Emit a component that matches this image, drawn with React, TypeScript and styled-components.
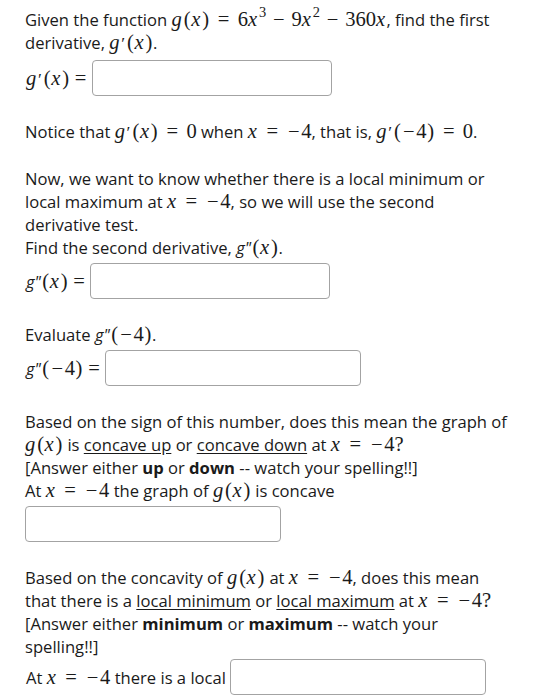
import styled, { createGlobalStyle } from "styled-components";
import type { ReactNode } from "react";

const GlobalStyle = createGlobalStyle`
  html, body {
    margin: 0;
    padding: 0;
    background: #ffffff;
  }
  body {
    font-family: "Open Sans", "DejaVu Sans", sans-serif;
    font-size: 16.6px;
    color: #1a1a1a;
  }
`;

const Page = styled.div`
  width: 535px;
  padding: 8px 25px 0 25px;
  box-sizing: border-box;
  display: flex;
  flex-direction: column;
  gap: 24px;
`;

const Section = styled.div`
  display: flex;
  flex-direction: column;
`;

const Line = styled.div`
  line-height: 23px;
  white-space: nowrap;
`;

const AnswerRow = styled.div<{ $top?: number }>`
  display: flex;
  align-items: center;
  margin-top: ${(p) => p.$top ?? 4}px;
  line-height: 23px;
`;

const Label = styled.span`
  white-space: nowrap;
  padding-left: 1px;
`;

const AnswerBox = styled.input.attrs({ type: "text" })<{ $w: number }>`
  width: ${(p) => p.$w}px;
  height: 36px;
  box-sizing: border-box;
  border: 1px solid #a3a3a3;
  border-radius: 4px;
  background: #ffffff;
  margin: 0;
  padding: 0 6px;
  font: inherit;
  outline: none;
`;

const Math = styled.span`
  font-family: "Liberation Serif", "DejaVu Serif", serif;
  font-size: 1.24em;
  line-height: 1;
  white-space: nowrap;
`;

const Var = styled.span`
  font-family: "Liberation Serif", "DejaVu Serif", serif;
  font-style: italic;
  margin-right: 0.06em;
`;

const Paren = styled.span`
  margin: 0 0.03em;
`;

const Op = styled.span<{ $space?: number }>`
  margin: 0 ${(p) => p.$space ?? 0.4}em;
`;

const Minus = styled.span`
  margin: 0 0.08em;
`;

const Sup = styled.sup`
  font-size: 0.7em;
  line-height: 0;
  vertical-align: 0.6em;
  margin-left: 0.05em;
`;

const Prime = styled.span`
  font-size: 0.85em;
  margin-left: 0.02em;
  margin-right: 0.08em;
`;

/* g" is typed as plain text in the source, so it uses the body font */
const TextG = styled.span`
  font-family: "Open Sans", "DejaVu Sans", sans-serif;
  font-size: 0.8em;
  font-style: italic;
  margin-right: 0.05em;
`;

const Under = styled.span`
  text-decoration: underline;
  text-underline-offset: 2px;
`;

const Bold = styled.b`
  font-weight: 700;
`;

const M = ({ children }: { children: ReactNode }) => <Math>{children}</Math>;

const X = () => <Var>x</Var>;

const Neg4 = () => (
  <>
    <Minus>−</Minus>4
  </>
);

const Args = ({ children }: { children: ReactNode }) => (
  <>
    <Paren>(</Paren>
    {children}
    <Paren>)</Paren>
  </>
);

const GX = () => (
  <>
    <Var>g</Var>
    <Args>
      <X />
    </Args>
  </>
);

const GPrime = ({ arg }: { arg: ReactNode }) => (
  <>
    <Var>g</Var>
    <Prime>′</Prime>
    <Args>{arg}</Args>
  </>
);

const GSecond = ({ arg }: { arg: ReactNode }) => (
  <>
    <TextG>g"</TextG>
    <Args>{arg}</Args>
  </>
);

const XEqMinus4 = () => (
  <M>
    <X />
    <Op>=</Op>
    <Neg4 />
  </M>
);

export default function App() {
  return (
    <>
      <GlobalStyle />
      <Page>
        <Section>
          <Line>
            Given the function{" "}
            <M>
              <GX />
              <Op>=</Op>6<X />
              <Sup>3</Sup>
              <Op $space={0.33}>−</Op>9<X />
              <Sup>2</Sup>
              <Op $space={0.33}>−</Op>360<X />
            </M>
            , find the first
          </Line>
          <Line>
            derivative,{" "}
            <M>
              <GPrime arg={<X />} />
            </M>
            .
          </Line>
          <AnswerRow $top={6}>
            <Label>
              <M>
                <GPrime arg={<X />} />
                <Op $space={0.25}>=</Op>
              </M>
            </Label>
            <AnswerBox $w={240} />
          </AnswerRow>
        </Section>

        <Section>
          <Line>
            Notice that{" "}
            <M>
              <GPrime arg={<X />} />
              <Op>=</Op>0
            </M>{" "}
            when <XEqMinus4 />, that is,{" "}
            <M>
              <GPrime arg={<Neg4 />} />
              <Op>=</Op>0
            </M>
            .
          </Line>
        </Section>

        <Section>
          <Line>Now, we want to know whether there is a local minimum or</Line>
          <Line>
            local maximum at <XEqMinus4 />, so we will use the second
          </Line>
          <Line>derivative test.</Line>
          <Line>
            Find the second derivative,{" "}
            <M>
              <GSecond arg={<X />} />
            </M>
            .
          </Line>
          <AnswerRow>
            <Label>
              <M>
                <GSecond arg={<X />} />
                <Op $space={0.25}>=</Op>
              </M>
            </Label>
            <AnswerBox $w={240} />
          </AnswerRow>
        </Section>

        <Section>
          <Line>
            Evaluate{" "}
            <M>
              <GSecond arg={<Neg4 />} />
            </M>
            .
          </Line>
          <AnswerRow>
            <Label>
              <M>
                <GSecond arg={<Neg4 />} />
                <Op $space={0.25}>=</Op>
              </M>
            </Label>
            <AnswerBox $w={256} />
          </AnswerRow>
        </Section>

        <Section>
          <Line>Based on the sign of this number, does this mean the graph of</Line>
          <Line>
            <M>
              <GX />
            </M>{" "}
            is <Under>concave up</Under> or <Under>concave down</Under> at{" "}
            <M>
              <X />
              <Op>=</Op>
              <Neg4 />?
            </M>
          </Line>
          <Line>
            [Answer either <Bold>up</Bold> or <Bold>down</Bold> -- watch your
            spelling!!]
          </Line>
          <Line>
            At <XEqMinus4 /> the graph of{" "}
            <M>
              <GX />
            </M>{" "}
            is concave
          </Line>
          <AnswerRow>
            <AnswerBox $w={256} />
          </AnswerRow>
        </Section>

        <Section>
          <Line>
            Based on the concavity of{" "}
            <M>
              <GX />
            </M>{" "}
            at <XEqMinus4 />, does this mean
          </Line>
          <Line>
            that there is a <Under>local minimum</Under> or{" "}
            <Under>local maximum</Under> at{" "}
            <M>
              <X />
              <Op>=</Op>
              <Neg4 />?
            </M>
          </Line>
          <Line>
            [Answer either <Bold>minimum</Bold> or <Bold>maximum</Bold> -- watch
            your
          </Line>
          <Line>spelling!!]</Line>
          <AnswerRow $top={1}>
            <Label>
              At <XEqMinus4 /> there is a local&nbsp;
            </Label>
            <AnswerBox $w={256} />
          </AnswerRow>
        </Section>
      </Page>
    </>
  );
}
